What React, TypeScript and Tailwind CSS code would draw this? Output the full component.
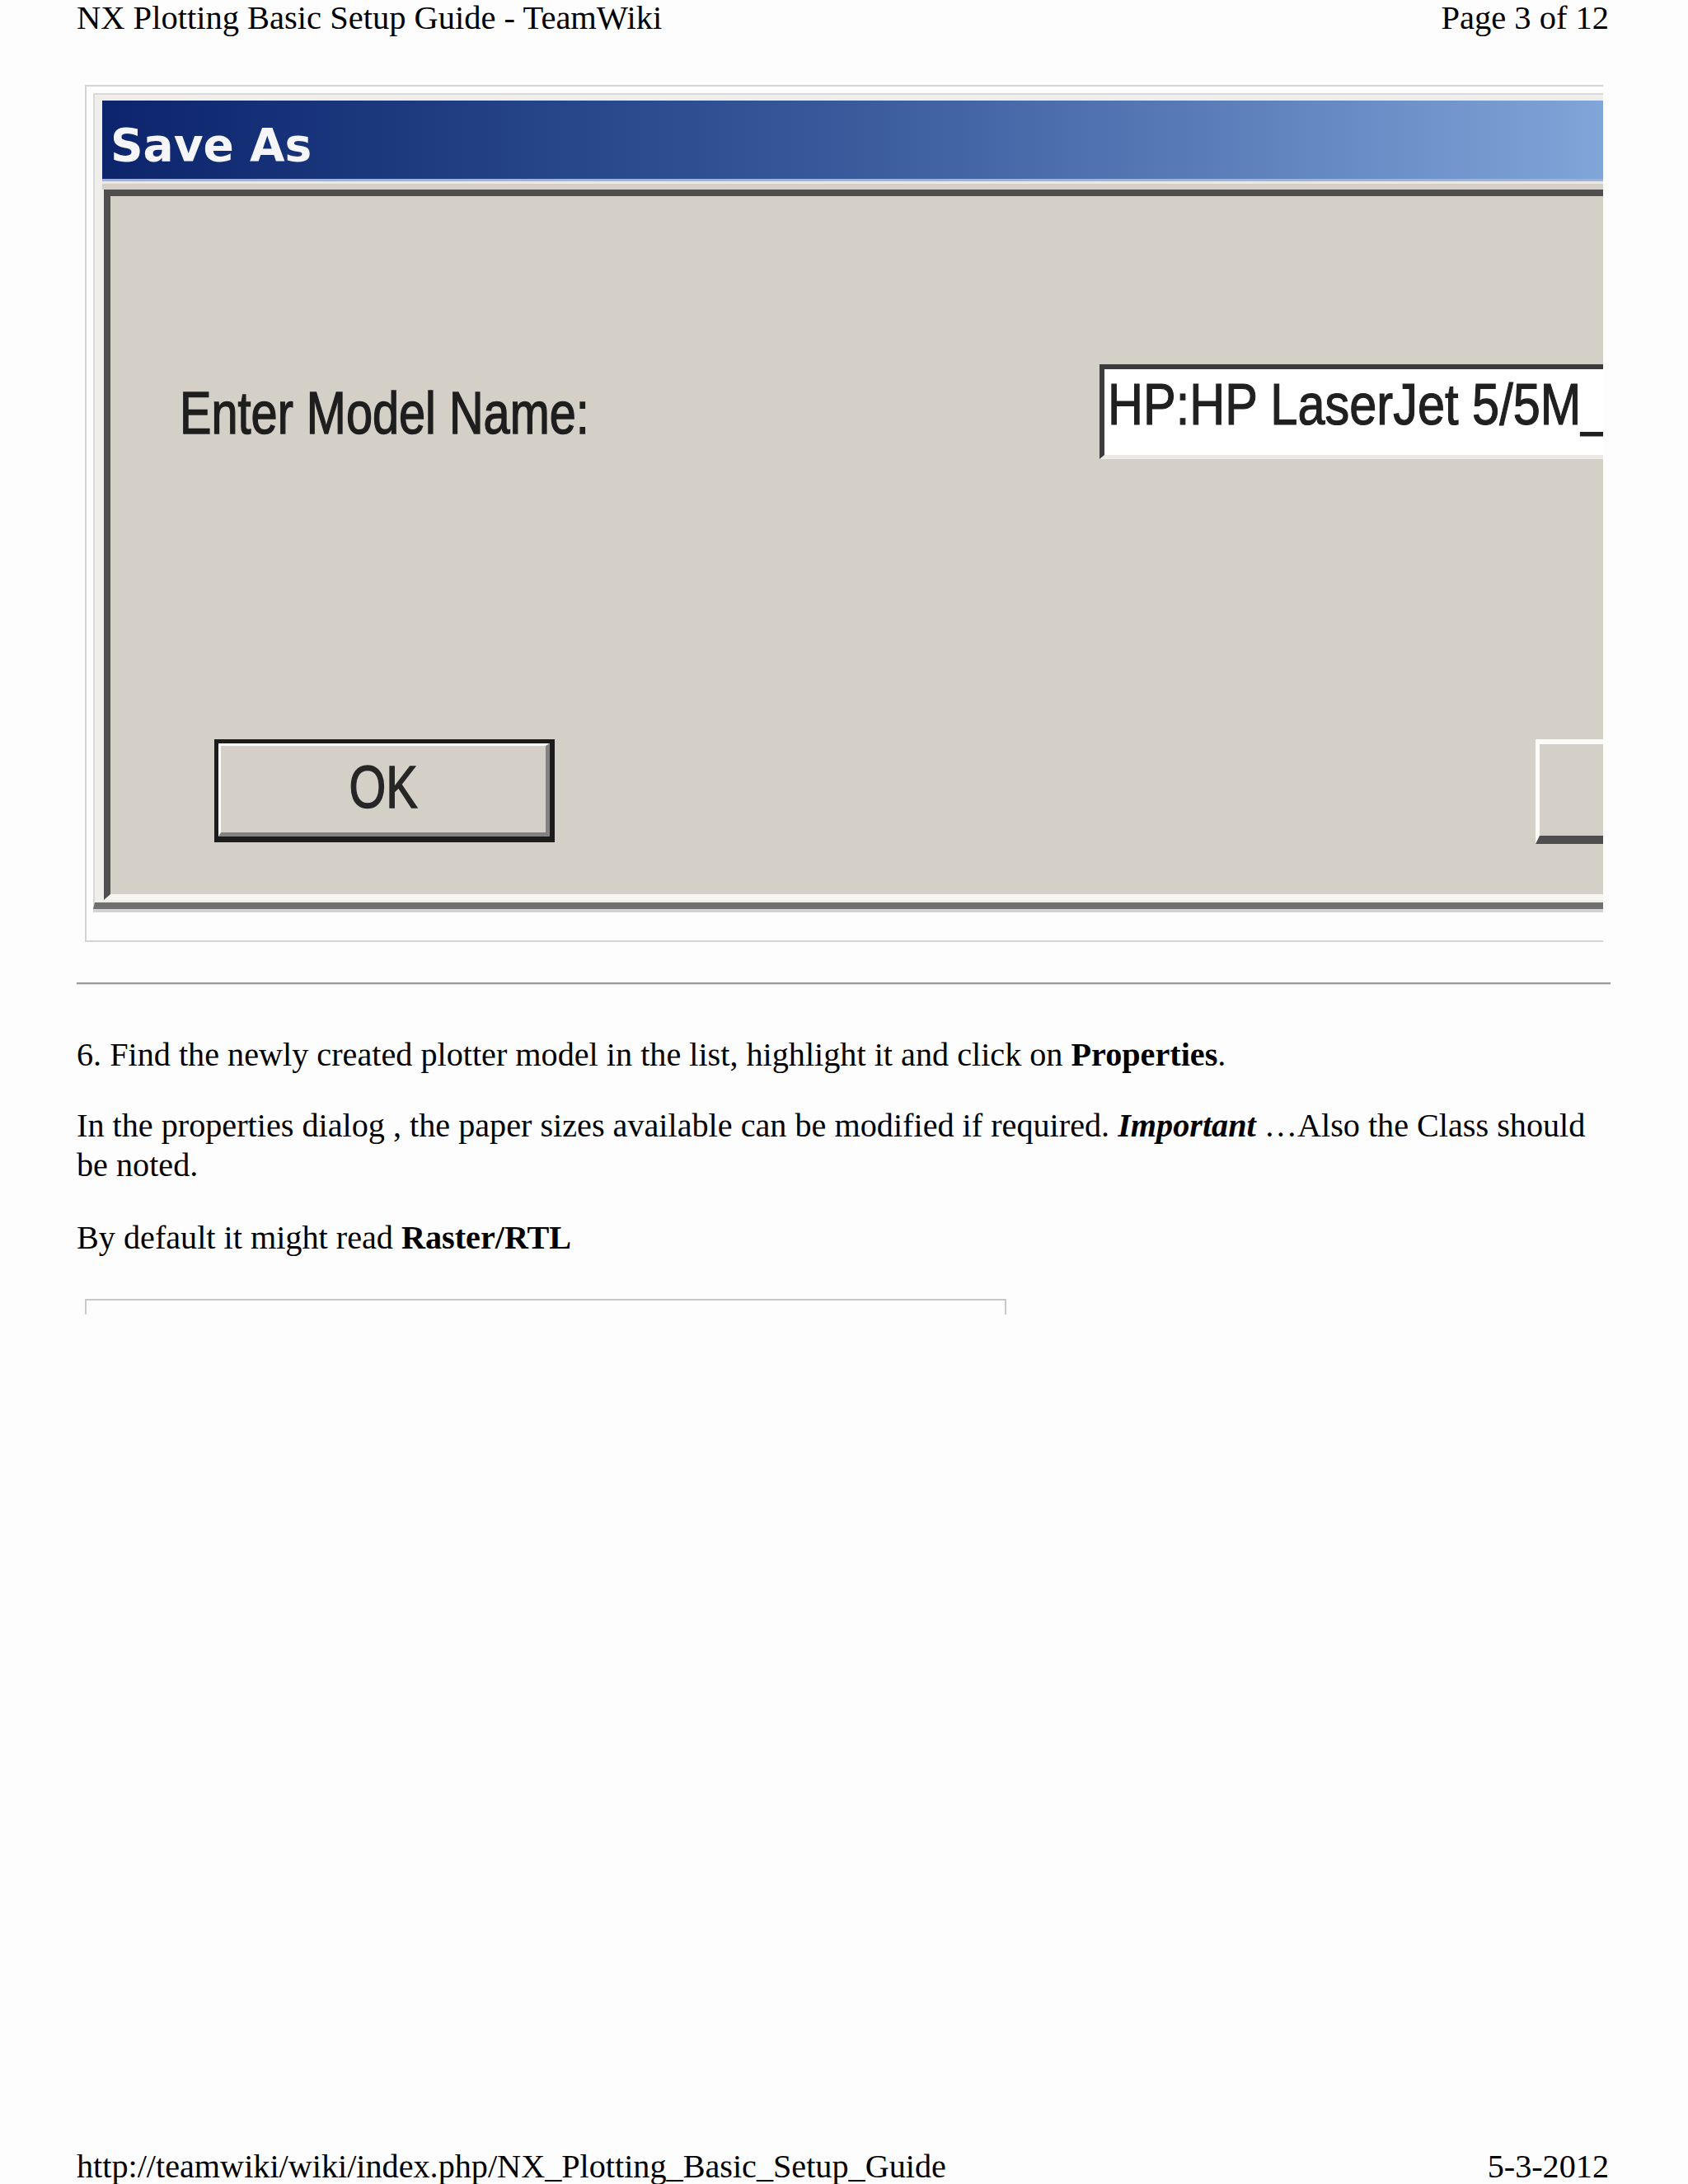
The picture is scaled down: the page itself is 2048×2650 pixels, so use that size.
import React from "react";

export default function App() {
  return (
    <div className="w-[2048px] h-[2650px] overflow-hidden bg-[#fefdfd] flex flex-col text-black font-['Liberation_Serif','Times_New_Roman',serif]">
      {/* Header */}
      <div className="flex justify-between pl-[93px] pr-[96px] pt-[1.5px] text-[40.5px] leading-[40px]">
        <span>NX Plotting Basic Setup Guide - TeamWiki</span>
        <span>Page 3 of 12</span>
      </div>

      {/* Screenshot frame */}
      <div className="ml-[103px] mt-[61.5px] w-[1842px] h-[1040px] shrink-0 overflow-hidden border-t-2 border-l-2 border-b-2 border-[#d4d4d4] pl-[8px] pt-[8px]">
        <div className="w-[1832px] border-b-4 border-[#d2d2d2]">
          <div className="border-t-2 border-l-2 border-[#d8d8d8] bg-[#efeeeb] pl-[9px] pt-[7px] pb-[3px] border-b-[8px] border-b-[#6f6f6f]">
            {/* Title bar */}
            <div className="h-[98px] bg-linear-to-r from-[#0c246c] via-[#3a5a9c] to-[#80a5d9] border-b-[3px] border-b-[#9fb3d6] pl-[10px] pt-[26.5px]">
              <span className="font-['DejaVu_Sans',sans-serif] font-bold text-[55px] leading-[55px] text-[#f6f6fa]">
                Save As
              </span>
            </div>
            <div className="h-[10px] border-t-[3px] border-[#e9e8e4] bg-[#d4d0c8]" />
            {/* Panel */}
            <div className="ml-[2px] h-[862px] border-t-[8px] border-l-[8px] border-[#4f4f4f] border-b-[7px] border-b-[#f7f6f3] bg-[#d4d0c8] font-['Liberation_Sans',Arial,sans-serif] text-[#1e1e1e]">
              {/* Row 1 */}
              <div className="flex items-start mt-[204px]">
                <div className="w-[1200px] shrink-0 pl-[84px] pt-[22px]">
                  <span className="inline-block origin-left scale-x-[0.79] text-[73px] leading-[73px] whitespace-nowrap [-webkit-text-stroke:1.5px_#1e1e1e]">
                    Enter Model Name:
                  </span>
                </div>
                <div className="w-[800px] h-[115px] shrink-0 border-t-[6px] border-l-[6px] border-[#3d3d3d] border-b-[5px] border-b-[#ebeae6] bg-white pl-[4px] pt-[8px] overflow-hidden">
                  <span className="inline-block origin-left scale-x-[0.85] text-[70px] leading-[70px] whitespace-nowrap text-[#202020] [-webkit-text-stroke:1.2px_#202020]">
                    HP:HP LaserJet 5/5M_
                  </span>
                </div>
              </div>
              {/* Row 2 */}
              <div className="flex items-start mt-[340px]">
                <div className="ml-[126px] w-[413px] h-[125px] shrink-0 border-[5px] border-r-[6px] border-b-[7px] border-[#1c1c1c]">
                  <div className="h-full border-t-[3px] border-l-[3px] border-[#fbfbfa] border-r-[5px] border-b-[5px] border-r-[#828282] border-b-[#828282] text-center pt-[14px]">
                    <span className="inline-block origin-center scale-x-[0.8] text-[72px] leading-[72px] text-[#262626] [-webkit-text-stroke:1.5px_#262626]">
                      OK
                    </span>
                  </div>
                </div>
                <div className="ml-[1190px] w-[200px] h-[127px] shrink-0 border-t-[6px] border-l-[5px] border-[#fbfbfa] border-b-[10px] border-b-[#4e4e4e]" />
              </div>
            </div>
          </div>
        </div>
      </div>

      {/* Horizontal rule */}
      <div className="ml-[93px] mr-[94px] mt-[49px] h-[3px] border-t-2 border-[#9b9b9b] border-b border-b-[#dedede]" />

      {/* Body text */}
      <div className="pl-[93px] pr-[94px] text-[40.2px] leading-[48px]">
        <p className="mt-[60.5px]">
          6. Find the newly created plotter model in the list, highlight it and click on <b>Properties</b>.
        </p>
        <p className="mt-[38px]">
          In the properties dialog , the paper sizes available can be modified if required. <b><i>Important</i></b> …Also the Class should be noted.
        </p>
        <p className="mt-[40px]">
          By default it might read <b>Raster/RTL</b>
        </p>
      </div>

      {/* Second image frame (cut off) */}
      <div className="ml-[103px] mt-[50.5px] w-[1118px] h-[19px] border-t-2 border-l-2 border-r-2 border-[#c9c9c9]" />

      {/* Footer */}
      <div className="mt-auto flex justify-between pl-[93px] pr-[96px] pb-[1.5px] text-[40.2px] leading-[40px]">
        <span>http://teamwiki/wiki/index.php/NX_Plotting_Basic_Setup_Guide</span>
        <span>5-3-2012</span>
      </div>
    </div>
  );
}
